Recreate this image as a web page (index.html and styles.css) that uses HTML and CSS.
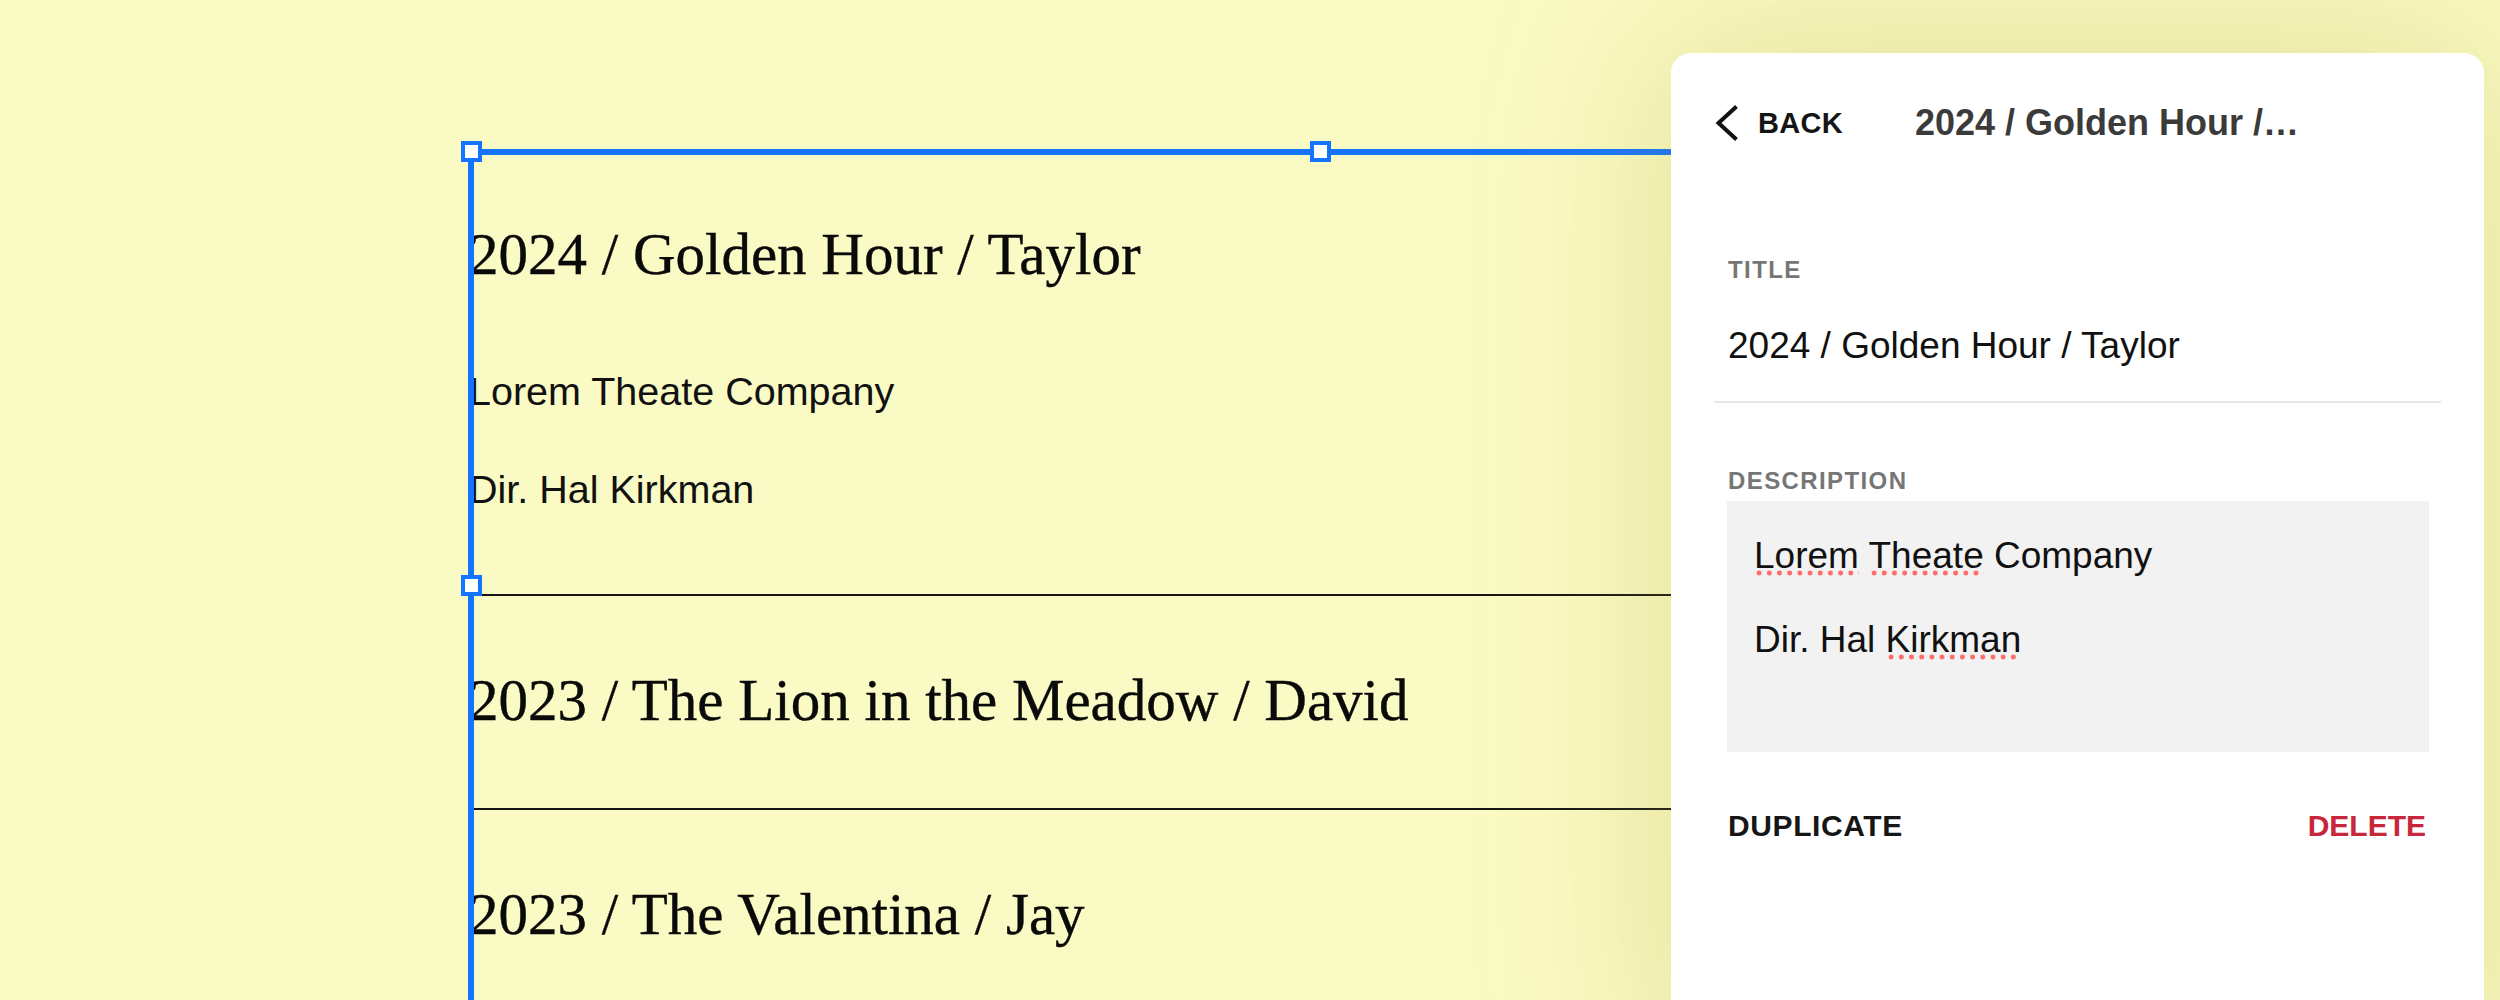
FILE: index.html
```html
<!DOCTYPE html>
<html lang="en">
<head>
<meta charset="utf-8">
<title>Golden Hour editor</title>
<link rel="stylesheet" href="styles.css">
</head>
<body>
<div class="stage">
  <main class="canvas">
    <div class="list">
      <section class="entry">
        <h2 class="entry-title">2024 / Golden Hour / Taylor</h2>
        <div class="entry-desc">
          <p>Lorem Theate Company</p>
          <p>Dir. Hal Kirkman</p>
        </div>
      </section>
      <section class="entry">
        <h2 class="entry-title">2023 / The Lion in the Meadow / David</h2>
      </section>
      <section class="entry">
        <h2 class="entry-title">2023 / The Valentina / Jay</h2>
      </section>
    </div>
    <div class="selection">
      <span class="handle handle-tl"></span>
      <span class="handle handle-tm"></span>
      <span class="handle handle-ml"></span>
    </div>
  </main>

  <aside class="panel">
    <header class="panel-head">
      <div class="back">
        <svg class="chev" width="24" height="36" viewBox="0 0 24 36" aria-hidden="true">
          <polyline points="21.5,1.5 3.5,18 21.5,34.5" fill="none" stroke="#111" stroke-width="4"/>
        </svg>
        <span class="back-label">BACK</span>
      </div>
      <div class="head-title">2024 / Golden Hour /…</div>
    </header>

    <div class="field field-title">
      <div class="label">TITLE</div>
      <div class="value">2024 / Golden Hour / Taylor</div>
    </div>

    <div class="field field-desc">
      <div class="label">DESCRIPTION</div>
      <div class="desc-box">
        <p><span class="sp">Lorem</span> <span class="sp">Theate</span> Company</p>
        <p>Dir. Hal <span class="sp">Kirkman</span></p>
      </div>
    </div>

    <div class="actions">
      <span class="act act-dup">DUPLICATE</span>
      <span class="act act-del">DELETE</span>
    </div>
  </aside>
</div>
</body>
</html>
```

FILE: styles.css
```css
html, body {
  margin: 0;
  padding: 0;
}
body {
  background: #fafac4;
  overflow: hidden;
}
.stage {
  position: relative;
  width: 2500px;
  height: 1000px;
  overflow: hidden;
  background: #fafac4;
}

/* canvas */
.canvas {
  position: relative;
  box-sizing: border-box;
  height: 100%;
  padding: 150px 0 0 469px;
}
.list {
  width: 1700px;
}
.entry {
  padding: 64px 0 68px;
  border-bottom: 2px solid #161616;
}
.entry-title {
  margin: 0;
  font: 400 59px/80px "Liberation Serif", "Times New Roman", serif;
  color: #0a0a0a;
  white-space: nowrap;
  -webkit-text-stroke: 0.4px #0a0a0a;
}
.entry-desc {
  margin: 67px 0 7px;
}
.entry-desc p {
  margin: 0;
  font: 400 39.5px/60px "Liberation Sans", Arial, sans-serif;
  color: #111;
}
.entry-desc p + p {
  margin-top: 38px;
}

/* selection overlay */
.selection {
  position: absolute;
  left: 468px;
  top: 149px;
  width: 1700px;
  height: 880px;
  box-sizing: border-box;
  border: 6px solid #1473ff;
  pointer-events: none;
}
.handle {
  position: absolute;
  width: 21px;
  height: 21px;
  box-sizing: border-box;
  border: 4px solid #1473ff;
  background: #fff;
}
.handle-tl { left: -13px; top: -14px; }
.handle-tm { left: 836px; top: -14px; }
.handle-ml { left: -13px; top: 420px; }

/* panel */
.panel {
  position: absolute;
  left: 1671px;
  top: 53px;
  width: 813px;
  height: 1000px;
  box-sizing: border-box;
  padding: 52px 43px 0;
  background: #fff;
  border-radius: 20px;
  box-shadow: 0 0 180px 10px rgba(170, 160, 40, 0.27);
  font-family: "Liberation Sans", Arial, sans-serif;
  color: #111;
}
.panel-head {
  display: flex;
  align-items: center;
  height: 36px;
  padding-left: 1px;
}
.back {
  display: flex;
  align-items: center;
  gap: 19px;
}
.chev {
  display: block;
}
.back-label {
  font-size: 29px;
  line-height: 29px;
  font-weight: 700;
  letter-spacing: 0.3px;
  color: #151515;
}
.head-title {
  margin-left: 72px;
  font-size: 36px;
  line-height: 36px;
  font-weight: 700;
  color: #3b3b3b;
  white-space: nowrap;
}

.field {
  padding: 0 14px;
}
.label {
  font-size: 24px;
  line-height: 24px;
  font-weight: 700;
  letter-spacing: 1.4px;
  color: #767676;
}
.field-title {
  margin-top: 117px;
  padding-bottom: 37px;
  border-bottom: 2px solid #e6e6e6;
}
.value {
  margin-top: 45px;
  font-size: 37px;
  line-height: 37px;
  color: #111;
}
.field-desc {
  margin-top: 66px;
  padding: 0 12px 0 13px;
}
.field-desc .label {
  padding-left: 1px;
}
.desc-box {
  margin-top: 8px;
  height: 251px;
  box-sizing: border-box;
  padding: 13px 27px;
  background: #f2f2f2;
}
.desc-box p {
  margin: 0;
  font-size: 37px;
  line-height: 84px;
  color: #111;
}
.sp {
  background-image: radial-gradient(circle at center, #ff6b6b 0, #ff6b6b 2.2px, rgba(255, 107, 107, 0) 2.8px);
  background-repeat: repeat-x;
  background-size: 10.2px 6px;
  background-position: 0 100%;
}

.actions {
  display: flex;
  justify-content: space-between;
  margin-top: 59px;
  padding: 0 15px 0 14px;
}
.act {
  font-size: 30px;
  line-height: 30px;
  font-weight: 700;
}
.act-dup { color: #161616; letter-spacing: 0.6px; }
.act-del { color: #c8263a; }
```
